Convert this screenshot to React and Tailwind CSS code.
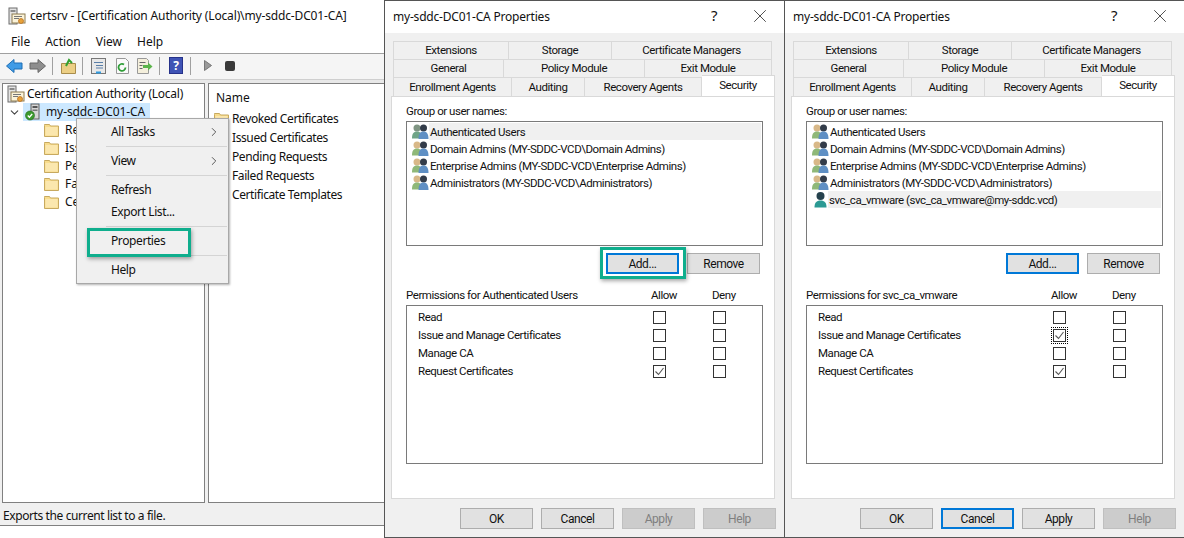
import { ChevronRight, ChevronDown, X } from "lucide-react";

const font = "font-['Noto_Sans',sans-serif]";

function CertIcon() {
  return (
    <svg width="18" height="18" viewBox="0 0 18 18" className="shrink-0">
      <rect x="1" y="1" width="8" height="16" fill="#e4e4e4" stroke="#6d6d6d" />
      <rect x="2.500" y="3" width="5" height="2" fill="#8a8a8a" />
      <rect x="4" y="7" width="13" height="9" fill="#fbf3d8" stroke="#8c7b50" />
      <path d="M6 9.500h8M6 11.500h5" stroke="#777" strokeWidth="1" />
      <circle cx="13" cy="14" r="2.500" fill="#e8a33a" stroke="#b2671a" strokeWidth="0.7" />
    </svg>
  );
}

function ServerIcon() {
  return (
    <svg width="18" height="18" viewBox="0 0 18 18" className="shrink-0">
      <rect x="7" y="1" width="8" height="15" fill="#d5d5d5" stroke="#5c5c5c" />
      <rect x="8.500" y="3" width="5" height="2" fill="#555" />
      <rect x="8.500" y="6.500" width="5" height="1.500" fill="#777" />
      <circle cx="6" cy="12.500" r="4.500" fill="#3c9a2e" stroke="#20661a" strokeWidth="0.6" />
      <path d="M3.800 12.500l1.600 1.700 2.800-3.200" fill="none" stroke="#fff" strokeWidth="1.400" />
    </svg>
  );
}

function Folder() {
  return (
    <svg width="15" height="14" viewBox="0 0 15 14" className="shrink-0">
      <path d="M.5 2.500V1.500h5l1 1.500h8v10.500H.5z" fill="#f8dc8c" stroke="#c7a95f" />
      <rect x="1.500" y="4" width="12" height="8.500" fill="#fbe7ae" />
    </svg>
  );
}

function UsersIcon({ pale }) {
  return (
    <svg width="17" height="15" viewBox="0 0 17 15" className="shrink-0">
      <circle cx="5" cy="4" r="3.500" fill={pale ? "#7f9583" : "#d8b888"} />
      <path d="M0 14.500c0-5 1.500-7 5-7s5 2 5 7z" fill={pale ? "#6fa487" : "#8fb878"} />
      <circle cx="11.500" cy="4" r="3.500" fill="#333c4a" />
      <path d="M6.500 15c0-5 1.500-7.500 5-7.500s5 2.500 5 7.500z" fill="#5f8fc4" />
    </svg>
  );
}

function UserIcon() {
  return (
    <svg width="15" height="17" viewBox="0 0 15 17" className="shrink-0">
      <circle cx="7.500" cy="5" r="4" fill="#25414d" />
      <path d="M1.500 16.500c0-5 2-7 6-7s6 2 6 7z" fill="#2b9a94" />
    </svg>
  );
}

function Toolbar() {
  return (
    <div className="h-[26px] flex items-center pl-[6px] pb-[2px] border-t border-[#a0a0a0] bg-[#f5f5f5]">
      <svg width="17" height="14" viewBox="0 0 17 14">
        <path d="M.5 7L8 .5V4h8v6H8v3.500z" fill="#3f9be6" stroke="#1f6fb5" />
      </svg>
      <svg width="17" height="14" viewBox="0 0 17 14" className="ml-[6px]">
        <path d="M16.500 7L9 .5V4H1v6h8v3.500z" fill="#8e8e8e" stroke="#666" />
      </svg>
      <div className="w-px h-[18px] bg-[#a0a0a0] ml-[6px]" />
      <svg width="15" height="16" viewBox="0 0 15 16" className="ml-[8px]">
        <path d="M.5 5.500h14v10H.5z" fill="#eccf85" stroke="#a98d4c" />
        <path d="M5 8l3-6 3 3" fill="none" stroke="#34a12f" strokeWidth="2" />
      </svg>
      <div className="w-px h-[18px] bg-[#a0a0a0] ml-[6px]" />
      <svg width="15" height="16" viewBox="0 0 15 16" className="ml-[8px]">
        <rect x=".5" y=".5" width="14" height="15" fill="#e8e8e8" stroke="#777" />
        <path d="M3 4.500h9M5 7.500h7M5 10h7" stroke="#5a7fa8" />
        <path d="M5 14.500h5" stroke="#2f9be0" strokeWidth="2" />
      </svg>
      <svg width="15" height="16" viewBox="0 0 15 16" className="ml-[9px]">
        <path d="M1.500.5h9l3 3v12h-12z" fill="#fafafa" stroke="#999" />
        <path d="M10.500 9.500a3.500 3.500 0 1 1-1.500-3" fill="none" stroke="#2f9e37" strokeWidth="1.800" />
      </svg>
      <svg width="16" height="16" viewBox="0 0 16 16" className="ml-[7px]">
        <path d="M.5.500h9l2 2V15.500H.5z" fill="#f4efdc" stroke="#999" />
        <path d="M2.500 4.500h6M2.500 7.500h3M2.500 10.500h3" stroke="#666" />
        <path d="M6 7h5V4.500L15.500 8.500 11 12.500V10H6z" fill="#5cb54a" />
      </svg>
      <div className="w-px h-[18px] bg-[#a0a0a0] ml-[6px]" />
      <div className="ml-[9px] w-[14px] h-[17px] bg-[#3f53b5] border border-[#26328a] flex items-center justify-center text-white text-[12px] font-bold leading-none">?</div>
      <div className="w-px h-[18px] bg-[#a0a0a0] ml-[7px]" />
      <svg width="8" height="11" viewBox="0 0 8 11" className="ml-[13px]">
        <path d="M.5.500l7 5-7 5z" fill="#999" stroke="#777" />
      </svg>
      <div className="ml-[13px] w-[10px] h-[10px] rounded-[2px] bg-[#3a3a3a]" />
    </div>
  );
}

function MenuItem({ label, arrow, h }) {
  return (
    <div className={`${h} flex items-center pl-[34px] pr-[7px] pb-[1px] justify-between`}>
      <span>{label}</span>
      {arrow && <ChevronRight size={14} strokeWidth={1.500} className="text-[#444]" />}
    </div>
  );
}

function MenuSep() {
  return <div className="h-px ml-[29px] mr-[1px] bg-[#d4d4d4]" />;
}

function ConsoleWindow() {
  const listItems = ["Revoked Certificates", "Issued Certificates", "Pending Requests", "Failed Requests", "Certificate Templates"];
  return (
    <div className="relative w-[384px] h-full bg-white flex flex-col shrink-0">
      <div className="h-[32px] flex items-center pl-[8px] gap-[4px] shrink-0">
        <CertIcon />
        <span className="text-[12px] text-[#111] tracking-[-0.15px]">certsrv - [Certification Authority (Local)\my-sddc-DC01-CA]</span>
      </div>
      <div className="h-[21px] flex items-center pl-[11px] pb-[2px] gap-[15px] text-[12px] text-[#111] shrink-0">
        <span>File</span>
        <span>Action</span>
        <span>View</span>
        <span>Help</span>
      </div>
      <Toolbar />
      <div className="h-[4px] bg-[#e8e8e8] border-t border-[#cfcfcf]" />
      <div className="h-[420px] flex shrink-0 bg-[#f0f0f0] pl-[2px]">
        <div className="w-[203px] border border-[#808080] bg-white text-[12px] text-[#111]">
          <div className="h-[19px] flex items-center pl-[4px]">
            <CertIcon />
            <span className="ml-[2px] tracking-[-0.25px]">Certification Authority (Local)</span>
          </div>
          <div className="h-[18px] flex items-center pl-[5px]">
            <ChevronDown size={13} strokeWidth={2} className="text-[#444]" />
            <div className="ml-[2px] h-[18px] w-[127px] bg-[#cce8ff] flex items-center pl-[1px]">
              <ServerIcon />
              <span className="ml-[4px] tracking-[-0.1px]">my-sddc-DC01-CA</span>
            </div>
          </div>
          {["Re", "Iss", "Pe", "Fa", "Ce"].map((t) => (
            <div key={t} className="h-[18px] flex items-center pl-[41px] gap-[6px]">
              <Folder />
              <span>{t}</span>
            </div>
          ))}
        </div>
        <div className="w-[3px]" />
        <div className="flex-1 border-l border-t border-b border-[#808080] bg-white text-[12px] text-[#111] pl-[5px]">
          <div className="h-[25px] flex items-center pl-[2px] pt-[3px]">Name</div>
          {listItems.map((t, i) => (
            <div key={t} className="h-[19px] flex items-center gap-[3px] tracking-[-0.4px]">
              {i === 0 ? <Folder /> : <div className="w-[15px]" />}
              <span>{t}</span>
            </div>
          ))}
        </div>
      </div>
      <div className="h-[23px] pl-[3px] pt-[5px] leading-[16px] bg-[#f0f0f0] border-b border-[#808080] text-[12px] text-[#111] tracking-[-0.4px] shrink-0">Exports the current list to a file.</div>

      {/* context menu */}
      <div className="absolute left-[76px] top-[118px] w-[153px] h-[166px] bg-[#f0f0f0] border border-[#a8a8a8] shadow-[1px_1px_2px_rgba(0,0,0,0.3)] text-[12px] text-[#111] tracking-[-0.4px]">
        <MenuItem label="All Tasks" arrow h="h-[27px]" />
        <MenuSep />
        <MenuItem label="View" arrow h="h-[28px]" />
        <MenuSep />
        <MenuItem label="Refresh" h="h-[28px]" />
        <MenuItem label="Export List..." h="h-[16px]" />
        <div className="h-[6px]" />
        <MenuSep />
        <MenuItem label="Properties" h="h-[28px]" />
        <MenuSep />
        <MenuItem label="Help" h="h-[28px]" />
        <div className="absolute left-[10px] top-[109px] w-[104px] h-[29px] border-[3px] border-[#0fae8d] shadow-[1px_2px_4px_rgba(0,0,0,0.35)]" />
      </div>
    </div>
  );
}

function Tab({ w, children }) {
  return (
    <div className={`${w} h-full flex items-center justify-center border-t border-r border-[#d9d9d9] bg-[#f0f0f0]`}>{children}</div>
  );
}

function Check({ checked, focus }) {
  return (
    <div className="w-[13px] h-[13px] bg-white border border-[#333] flex items-center justify-center relative">
      {checked && (
        <svg width="11" height="11" viewBox="0 0 11 11">
          <path d="M1.500 5.500l3 3 5-6.500" fill="none" stroke="#555" strokeWidth="1.100" />
        </svg>
      )}
      {focus && <div className="absolute -inset-[3px] border border-dotted border-black" />}
    </div>
  );
}

function Btn({ w = "w-[73px]", disabled, focus, children }) {
  return (
    <div
      className={`${w} h-[21px] flex items-center justify-center border text-[12px] ${
        disabled
          ? "bg-[#cccccc] border-[#bfbfbf] text-[#7f7f7f]"
          : focus
          ? "bg-[#e1e1e1] border-2 border-[#0078d7] text-[#111]"
          : "bg-[#e1e1e1] border-[#adadad] text-[#111]"
      }`}
    >
      {children}
    </div>
  );
}

function PropsDialog({ second }) {
  const users = [
    ["Authenticated Users", true],
    ["Domain Admins (MY-SDDC-VCD\\Domain Admins)"],
    ["Enterprise Admins (MY-SDDC-VCD\\Enterprise Admins)"],
    ["Administrators (MY-SDDC-VCD\\Administrators)"],
  ];
  const perms = ["Read", "Issue and Manage Certificates", "Manage CA", "Request Certificates"];
  return (
    <div className="relative w-[400px] h-full border-l border-t border-b border-[#555] flex flex-col bg-[#f0f0f0] text-[12px] text-[#111] shrink-0">
      <div className="h-[32px] bg-white flex items-center pl-[8px] shrink-0 relative tracking-[-0.2px]">
        <span>my-sddc-DC01-CA Properties</span>
        <span className="absolute left-[326px] top-[3px] text-[15px]">?</span>
        <X size={22} strokeWidth={0.8} className="absolute left-[364px] top-[4px]" />
      </div>
      <div className="font-['Roboto',sans-serif] text-[11.5px] tracking-[-0.45px]">
        <div className="pl-[8px] pt-[8px] shrink-0">
          <div className="h-[18px] w-[379px] flex">
            <Tab w="w-[116px] border-l">Extensions</Tab>
            <Tab w="w-[103px]">Storage</Tab>
            <Tab w="w-[160px]">Certificate Managers</Tab>
          </div>
          <div className="h-[18px] w-[379px] flex">
            <Tab w="w-[111px] border-l">General</Tab>
            <Tab w="w-[141px]">Policy Module</Tab>
            <Tab w="w-[127px]">Exit Module</Tab>
          </div>
          <div className="h-[19px] w-[382px] flex relative">
            <Tab w="w-[119px] border-l pt-[2px]">Enrollment Agents</Tab>
            <Tab w="w-[73px] pt-[2px]">Auditing</Tab>
            <Tab w="w-[117px] pt-[2px]">Recovery Agents</Tab>
            <div className="w-[73px] h-[21px] -mt-[2px] bg-white border-t border-r border-[#d9d9d9] z-10 flex items-center justify-center">Security</div>
          </div>
        </div>
        <div className="ml-[6px] w-[384px] h-[403px] bg-white border border-[#d9d9d9] pl-[14px] pt-[6px] shrink-0">
          <div className="h-[16px] leading-[16px]">Group or user names:</div>
          <div className="mt-[2px] w-[357px] h-[125px] border border-[#7a7a7a] px-[1px] pt-[1px]">
            {users.map(([name, selected]) => (
              <div key={name} className="h-[17px] flex items-center pl-[4px]">
                <UsersIcon pale={selected && !second} />
                <span className={`flex-1 h-full flex items-center pl-[1px] pt-[2px] ${selected && !second ? "bg-[#f0f0f0]" : ""}`}>{name}</span>
              </div>
            ))}
            {second && (
              <div className="h-[17px] flex items-center pl-[5px]">
                <UserIcon />
                <span className="flex-1 h-full flex items-center pl-[1px] pt-[2px] bg-[#f0f0f0]">svc_ca_vmware (svc_ca_vmware@my-sddc.vcd)</span>
              </div>
            )}
          </div>
          <div className="relative mt-[7px] w-[354px] flex justify-end gap-[8px]">
            <Btn focus>Add...</Btn>
            <Btn>Remove</Btn>
            {!second && <div className="absolute left-[194px] -top-[6px] w-[86px] h-[32px] border-[3px] border-[#0fae8d] shadow-[1px_2px_4px_rgba(0,0,0,0.35)]" />}
          </div>
          <div className="mt-[13px] w-[357px] h-[16px] flex items-center relative pt-[2px]">
            <span>Permissions for {second ? "svc_ca_vmware" : "Authenticated Users"}</span>
            <span className="absolute left-[245px]">Allow</span>
            <span className="absolute left-[306px]">Deny</span>
          </div>
          <div className="mt-[2px] w-[357px] h-[159px] border border-[#7a7a7a] pt-[2px] pl-[11px]">
            {perms.map((p, i) => (
              <div key={p} className="h-[18px] flex items-center">
                <span className="w-[235px] pt-[2px]">{p}</span>
                <Check checked={i === 3 || (second && i === 1)} focus={second && i === 1} />
                <div className="w-[47px]" />
                <Check />
              </div>
            ))}
          </div>
        </div>
        <div className="ml-[75px] mt-[9px] flex gap-[8px]">
          <Btn>OK</Btn>
          <Btn focus={second}>Cancel</Btn>
          <Btn disabled={!second}>Apply</Btn>
          <Btn disabled>Help</Btn>
        </div>
      </div>
    </div>
  );
}

export default function App() {
  return (
    <div className={`w-[1184px] h-[538px] flex overflow-hidden bg-white ${font}`}>
      <ConsoleWindow />
      <PropsDialog />
      <PropsDialog second />
    </div>
  );
}
